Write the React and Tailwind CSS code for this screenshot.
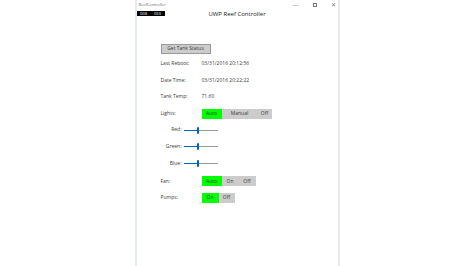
const Segmented = ({ options, active }) => (
  <div className="flex h-[10px] bg-[#cccccc]">
    {options.map((o, i) => (
      <div
        key={o.label}
        className={`flex items-center justify-center ${o.w} ${i === active ? 'bg-[#00ff00]' : ''}`}
      >
        {o.label}
      </div>
    ))}
  </div>
);

const Slider = () => (
  <div className="relative w-[34px] h-[8px] flex items-center">
    <div className="w-[13px] h-[1px] bg-[#0063b1]" />
    <div className="w-[2px] h-[7px] bg-[#0063b1] rounded-[1px]" />
    <div className="flex-1 h-[1px] bg-[#999999]" />
  </div>
);

const Row = ({ label, children }) => (
  <div className="flex items-center h-[16.6px]">
    <div className="w-[41px] whitespace-nowrap">{label}</div>
    {children}
  </div>
);

const SliderRow = ({ label }) => (
  <div className="flex items-center h-[16.6px]">
    <div className="w-[22px] text-right pr-[2px]">{label}</div>
    <Slider />
  </div>
);

export default function App() {
  return (
    <div
      className="w-full h-[266px] bg-white flex justify-center text-[5px] text-[#3a3a3a]"
      style={{ fontFamily: '"Open Sans", "Noto Sans", sans-serif' }}
    >
      <div className="relative w-[205px] h-full border-l-[2px] border-r-[2px] border-[#e6eaea] flex flex-col">
        {/* title bar */}
        <div className="flex items-center h-[10px] pl-[2px] pr-[2px] text-[4px] text-[#666666]">
          <span>ReefController</span>
          <div className="ml-auto flex items-center gap-[14px] text-[6px] text-[#777777]">
            <span>—</span>
            <span className="inline-block w-[4px] h-[4px] border-[0.6px] border-[#777777]" />
            <span>✕</span>
          </div>
        </div>
        <div className="absolute left-0 top-[11px] w-[28px] h-[5px] bg-black text-white text-[4px] flex items-center justify-around leading-none">
          <span>008</span>
          <span>050</span>
        </div>
        <div className="text-center text-[6px] leading-none mt-[1px] text-[#222222]">UWP Reef Controller</div>

        <div className="flex flex-col pl-[24px] mt-[27px]">
          <div className="w-[50px] h-[10px] bg-[#cccccc] border border-[#999999] flex items-center justify-center">
            Get Tank Status
          </div>
          <div className="mt-[1.5px]">
            <Row label="Last Reboot:">
              <span>03/31/2016 20:12:56</span>
            </Row>
            <Row label="Date Time:">
              <span>03/31/2016 20:22:22</span>
            </Row>
            <Row label="Tank Temp:">
              <span>71.60</span>
            </Row>
            <Row label="Lights:">
              <Segmented
                active={0}
                options={[
                  { label: 'Auto', w: 'w-[20px]' },
                  { label: 'Manual', w: 'w-[36px]' },
                  { label: 'Off', w: 'w-[14px]' },
                ]}
              />
            </Row>
            <div className="pl-[1px]">
              <SliderRow label="Red:" />
              <SliderRow label="Green:" />
              <SliderRow label="Blue:" />
            </div>
            <div className="h-[1.5px]" />
            <Row label="Fan:">
              <Segmented
                active={0}
                options={[
                  { label: 'Auto', w: 'w-[20px]' },
                  { label: 'On', w: 'w-[17px]' },
                  { label: 'Off', w: 'w-[17px]' },
                ]}
              />
            </Row>
            <Row label="Pumps:">
              <Segmented
                active={0}
                options={[
                  { label: 'On', w: 'w-[17px]' },
                  { label: 'Off', w: 'w-[16px]' },
                ]}
              />
            </Row>
          </div>
        </div>
      </div>
    </div>
  );
}
